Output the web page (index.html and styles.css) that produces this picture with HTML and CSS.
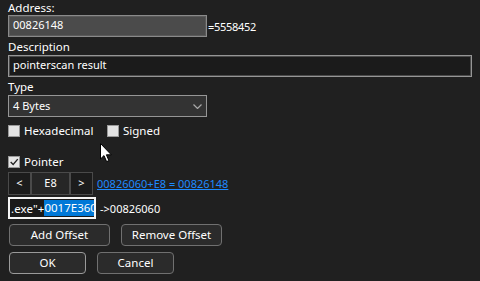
FILE: index.html
```html
<!DOCTYPE html>
<html>
<head>
<meta charset="utf-8">
<link rel="stylesheet" href="styles.css">
</head>
<body>
<div class="dlg">
  <div class="lbl lbl-first">Address:</div>
  <div class="row">
    <div class="field addr">00826148</div>
    <span class="eq">=5558452</span>
  </div>
  <div class="lbl">Description</div>
  <div class="field desc">pointerscan result</div>
  <div class="lbl">Type</div>
  <div class="field combo">
    <span>4 Bytes</span>
    <svg class="chev" width="9" height="5" viewBox="0 0 9 5"><path d="M0.5 0.5 L4.5 4.5 L8.5 0.5" fill="none" stroke="#a8a8a8" stroke-width="1.2"/></svg>
  </div>
  <div class="checks">
    <label class="chk"><span class="box"></span>Hexadecimal</label>
    <label class="chk"><span class="box"></span>Signed</label>
  </div>
  <label class="chk ptr"><span class="box checked"><svg width="12" height="12" viewBox="0 0 12 12"><path d="M2 6 L5 9 L10.5 2.5" fill="none" stroke="#222" stroke-width="1.6"/></svg></span>Pointer</label>
  <div class="nav">
    <div class="nb">&lt;</div>
    <div class="nb mid">E8</div>
    <div class="nb">&gt;</div>
    <a class="link">00826060+E8 = 00826148</a>
  </div>
  <div class="offrow">
    <div class="edit"><span class="pre">.exe"+</span><span class="sel">0017E360</span><span class="caret"></span></div>
    <span class="res">-&gt;00826060</span>
  </div>
  <div class="btns">
    <div class="btn wide">Add Offset</div>
    <div class="btn wide">Remove Offset</div>
  </div>
  <div class="btns ok">
    <div class="btn sm focus">OK</div>
    <div class="btn sm">Cancel</div>
  </div>
  <svg class="cursor" width="13" height="20" viewBox="0 0 13 20"><path d="M0.5 0.5 L0.5 16 L4 12.6 L6.6 18.6 L8.9 17.6 L6.4 11.8 L11.3 11.8 Z" fill="#fff" stroke="#000" stroke-width="1"/></svg>
</div>
</body>
</html>
```
FILE: styles.css
```css
* { box-sizing: border-box; }
html, body { margin: 0; padding: 0; }
body {
  width: 480px; height: 281px;
  background: #202020;
  color: #fff;
  font-family: "Noto Sans", "Open Sans", sans-serif;
  font-size: 11px;
  overflow: hidden;
}
.dlg {
  position: relative;
  padding: 0 8px;
  display: flex;
  flex-direction: column;
  align-items: flex-start;
  height: 281px;
}
.lbl { height: 18px; line-height: 18px; padding-top: 1px; font-size: 11.5px; }
.lbl-first { height: 15px; line-height: 15px; padding-top: 0; }
.row { display: flex; align-items: center; }
.field {
  height: 22px;
  line-height: 18px;
  padding: 0 4px;
  border: 1px solid #969696;
}
.addr {
  width: 199px;
  background: #4b4b4b;
  border-color: #8a8a8a;
  box-shadow: inset 0 0 0 1px #5a5a5a;
}
.eq { padding-left: 1px; letter-spacing: -0.3px; }
.desc {
  width: 464px;
  background: #1b1b1b;
  box-shadow: inset 0 0 0 1px #4a4a4a;
}
.combo {
  width: 199px;
  background: #333333;
  display: flex;
  align-items: center;
  justify-content: space-between;
  padding-right: 4px;
}
.chev { margin-top: 1px; }
.checks { display: flex; gap: 0; margin-top: 7px; }
.chk { display: flex; align-items: center; height: 14px; line-height: 14px; font-size: 11.5px; }
.checks .chk:first-child { width: 99px; }
.box {
  width: 12px; height: 12px;
  background: #e3e3e3;
  border: 1px solid #9a9a9a;
  margin-right: 4px;
  display: inline-flex;
  align-items: center; justify-content: center;
}
.box.checked { background: #e6e6e6; }
.box svg { display: block; }
.ptr { margin-top: 17px; }
.nav { display: flex; align-items: center; margin-top: 3px; height: 23px; }
.nb {
  height: 23px;
  width: 23px;
  border: 1px solid #4a4a4a;
  background: #1c1c1c;
  text-align: center;
  line-height: 20px;
}
.nb.mid { width: 39px; background: #262626; border-left: none; border-right: none; box-shadow: inset 1px 0 0 #4a4a4a, inset -1px 0 0 #4a4a4a; }
.link {
  margin-left: 4px;
  color: #1e8aff;
  text-decoration: underline;
  line-height: 16px;
}
.offrow { display: flex; align-items: center; margin-top: 2px; }
.edit {
  width: 88px; height: 22px;
  border: 2px solid #f5f5f5;
  background: #1a1a1a;
  display: flex; align-items: center;
  padding-left: 1px;
  overflow: hidden;
  white-space: nowrap;
  font-size: 11.5px;
}
.pre { letter-spacing: 0.1px; }
.sel { background: #0078d7; color: #fff; line-height: 16px; flex: none; }
.caret { width: 1px; height: 16px; background: #ff8c1a; flex: none; }
.res { margin-left: 4px; }
.btns { display: flex; gap: 11px; margin-top: 5px; margin-left: 1px; }
.btns.ok { margin-top: 6px; }
.btn {
  height: 22px;
  border: 1px solid #707070;
  border-radius: 4px;
  background: #2b2b2b;
  text-align: center;
  line-height: 19px;
  font-size: 11.5px;
}
.btn.wide { width: 101px; }
.btn.sm { width: 77px; }
.btn.focus { border-color: #9a9a9a; }
.cursor { position: absolute; left: 100px; top: 143px; }
```
